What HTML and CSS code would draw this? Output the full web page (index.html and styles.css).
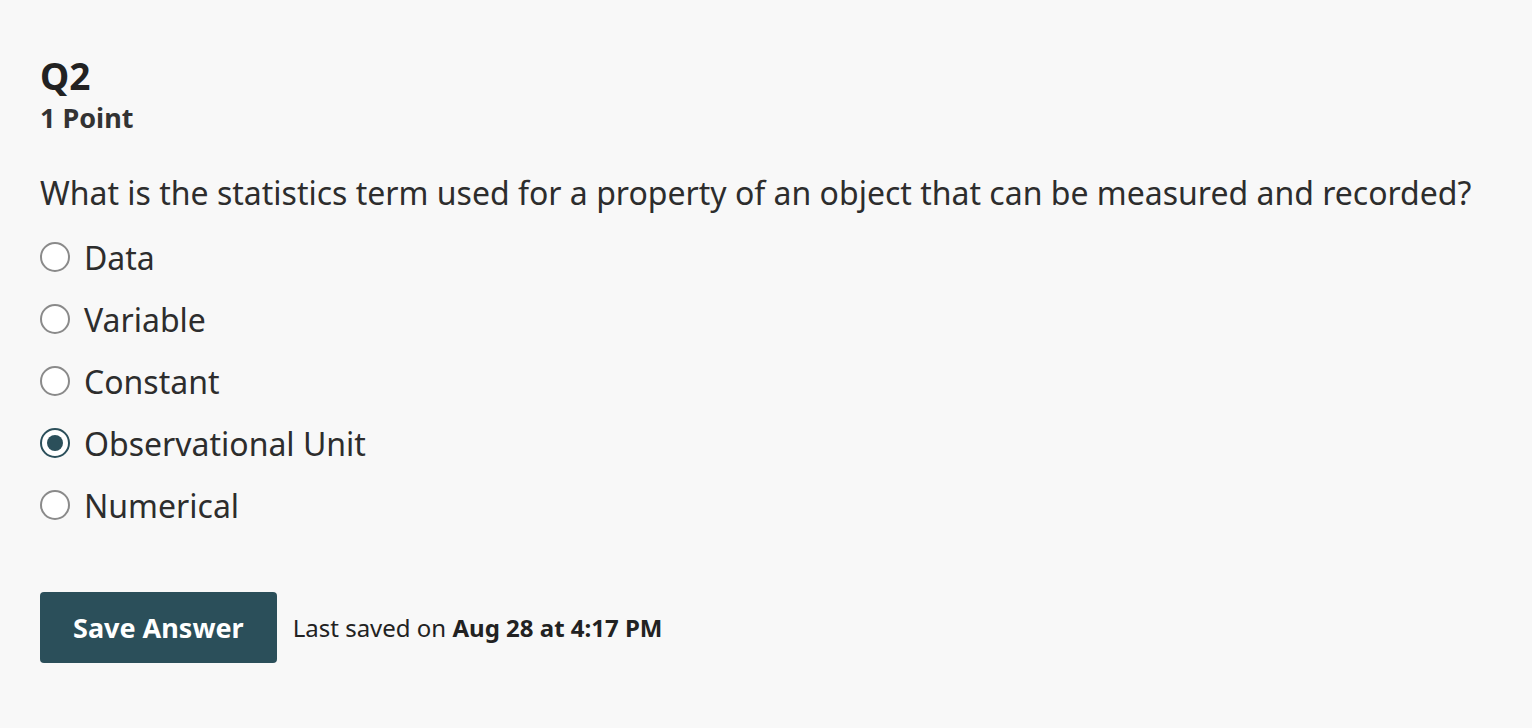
FILE: index.html
```html
<!DOCTYPE html>
<html lang="en">
<head>
    <meta charset="UTF-8">
    <title>Q2</title>
    <link rel="stylesheet" href="styles.css">
</head>
<body>
    <div class="question">
        <h2 class="q-title">Q2</h2>
        <div class="q-points">1 Point</div>
        <p class="q-text">What is the statistics term used for a property of an object that can be measured and recorded?</p>
        <div class="options">
            <label class="option"><span class="radio"></span>Data</label>
            <label class="option"><span class="radio"></span>Variable</label>
            <label class="option"><span class="radio"></span>Constant</label>
            <label class="option"><span class="radio checked"></span>Observational Unit</label>
            <label class="option"><span class="radio"></span>Numerical</label>
        </div>
        <div class="actions">
            <button class="btn">Save Answer</button>
            <span class="saved">Last saved on <strong>Aug 28 at 4:17 PM</strong></span>
        </div>
    </div>
</body>
</html>
```

FILE: styles.css
```css
body {
    margin: 0;
    padding: 0;
    background: #f8f8f8;
    font-family: "Noto Sans", "Open Sans", sans-serif;
    color: #2d2d2d;
}
.question {
    padding: 52px 40px;
}
.q-title {
    margin: 0;
    font-size: 37px;
    font-weight: bold;
    line-height: 48px;
    color: #222;
}
.q-points {
    font-size: 27px;
    font-weight: bold;
    line-height: 36px;
    color: #333;
}
.q-text {
    margin: 35px 0 11px;
    font-size: 32px;
    line-height: 44px;
}
.options {
    display: flex;
    flex-direction: column;
}
.option {
    display: flex;
    align-items: center;
    gap: 14px;
    height: 62px;
    font-size: 32px;
}
.radio {
    width: 30px;
    height: 30px;
    border: 2px solid #8a8a8a;
    border-radius: 50%;
    background: #fff;
    box-sizing: border-box;
    flex-shrink: 0;
    position: relative;
}
.radio.checked {
    border: 2px solid #2b4f5a;
}
.radio.checked::after {
    content: "";
    position: absolute;
    left: 5px;
    top: 5px;
    width: 16px;
    height: 16px;
    border-radius: 50%;
    background: #2b4f5a;
}
.actions {
    display: flex;
    align-items: center;
    gap: 16px;
    margin-top: 56px;
}
.btn {
    background: #2b4f5a;
    color: #fff;
    border: none;
    border-radius: 4px;
    font-family: inherit;
    font-size: 27px;
    font-weight: bold;
    padding: 0 33px;
    height: 71px;
}
.saved {
    font-size: 24px;
    color: #222;
}
```
